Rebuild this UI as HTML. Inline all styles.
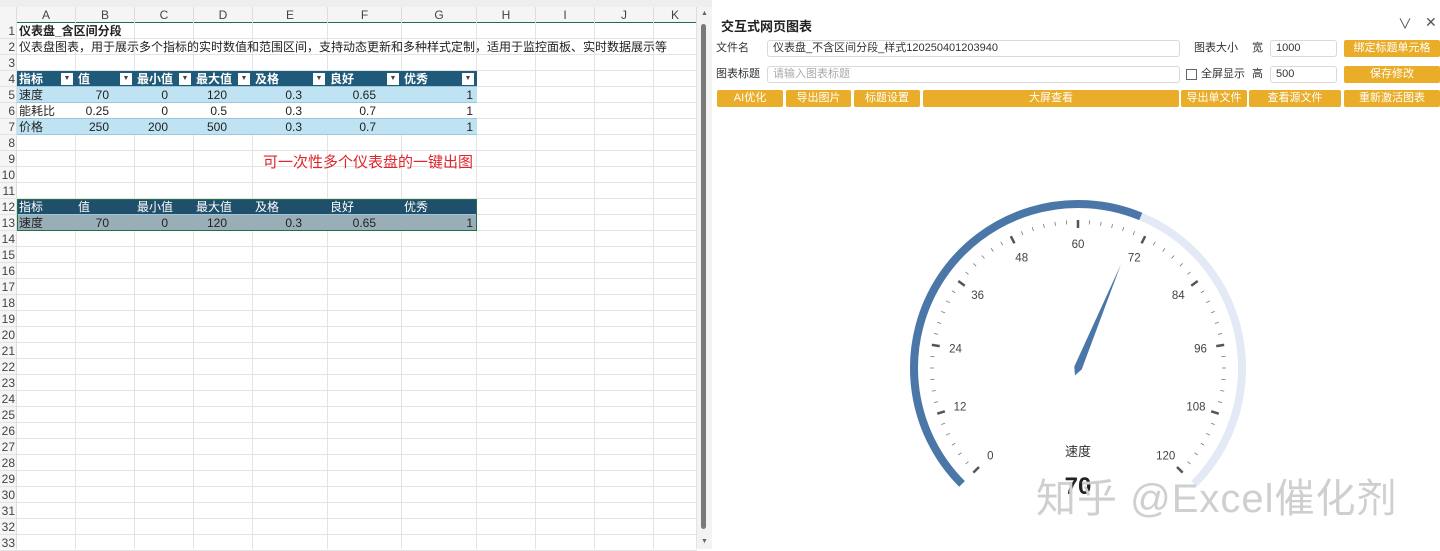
<!DOCTYPE html>
<html><head><meta charset="utf-8">
<style>
*{margin:0;padding:0;box-sizing:border-box}
body{width:1440px;height:549px;overflow:hidden;background:#fff;font-family:"Liberation Sans","Noto Sans CJK SC",sans-serif;position:relative}
.a{position:absolute}
#xl{position:absolute;left:0;top:0;width:697px;height:549px;font-size:12px;color:#222}
.c{position:absolute;white-space:nowrap;line-height:16px;font-size:12px}
.r{text-align:right}
#rp{position:absolute;left:712px;top:0;width:728px;height:549px;background:#fff;font-size:11px;color:#333}
.lb{position:absolute;line-height:17px;font-size:11px}
.in{position:absolute;border:1px solid #d9d9d9;border-radius:3px;height:17px;line-height:15px;padding-left:5px;font-size:11px;background:#fff}
.btn{position:absolute;background:#e9ad29;color:#fff;height:17px;line-height:17px;text-align:center;font-size:11px;border-radius:2px}
</style></head><body>
<div class="a" style="left:0;top:0;width:1440px;height:7px;background:#efedf0"></div>
<div id="xl"></div>
<div class="a" style="left:697px;top:7px;width:15px;height:542px;background:#f3f3f3"></div>
<div class="a" style="left:701px;top:24px;width:5px;height:505px;background:#7a7a7a;border-radius:3px"></div>
<div class="a" style="left:701px;top:10px;font-size:7px;color:#666">▲</div>
<div class="a" style="left:701px;top:538px;font-size:7px;color:#666">▼</div>
<div id="rp">
 <div class="a" style="left:9px;top:16px;font-size:13px;font-weight:bold;color:#222">交互式网页图表</div>
 <div class="a" style="left:686px;top:14px;font-size:14px;color:#555">∨</div>
 <div class="a" style="left:713px;top:14px;font-size:14px;color:#555">✕</div>
 <div class="lb" style="left:4px;top:40px">文件名</div>
 <div class="in" style="left:55px;top:40px;width:413px;color:#333">仪表盘_不含区间分段_样式120250401203940</div>
 <div class="lb" style="left:482px;top:40px">图表大小</div>
 <div class="lb" style="left:540px;top:40px">宽</div>
 <div class="in" style="left:558px;top:40px;width:67px">1000</div>
 <div class="btn" style="left:632px;top:40px;width:96px">绑定标题单元格</div>
 <div class="lb" style="left:4px;top:66px">图表标题</div>
 <div class="in" style="left:55px;top:66px;width:413px;color:#aaa">请输入图表标题</div>
 <div class="a" style="left:474px;top:69px;width:11px;height:11px;border:1px solid #666"></div>
 <div class="lb" style="left:489px;top:66px">全屏显示</div>
 <div class="lb" style="left:540px;top:66px">高</div>
 <div class="in" style="left:558px;top:66px;width:67px">500</div>
 <div class="btn" style="left:632px;top:66px;width:96px">保存修改</div>
 <div class="btn" style="left:5px;top:90px;width:66px">AI优化</div>
 <div class="btn" style="left:74px;top:90px;width:65px">导出图片</div>
 <div class="btn" style="left:142px;top:90px;width:66px">标题设置</div>
 <div class="btn" style="left:211px;top:90px;width:256px">大屏查看</div>
 <div class="btn" style="left:469px;top:90px;width:66px">导出单文件</div>
 <div class="btn" style="left:537px;top:90px;width:92px">查看源文件</div>
 <div class="btn" style="left:632px;top:90px;width:96px">重新激活图表</div>
</div>
<svg id="g" class="a" style="left:0;top:0" width="1440" height="549"></svg>
<div class="a" style="left:1036px;top:466px;font-size:40px;color:#cfcfcf;letter-spacing:1px;font-family:'Liberation Sans','Noto Sans CJK SC',sans-serif">知乎 @Excel催化剂</div>
<script>
var xl=document.getElementById('xl'),h='';
var cols=[['A',17,76],['B',76,135],['C',135,194],['D',194,253],['E',253,328],['F',328,402],['G',402,477],['H',477,536],['I',536,595],['J',595,654],['K',654,697]];
h+='<div class="a" style="left:0;top:7px;width:697px;height:16px;background:#f5f5f5;border-bottom:1px solid #1e7145"></div>';
h+='<div class="a" style="left:0;top:7px;width:17px;height:542px;background:#f5f5f5;border-right:1px solid #ddd"></div>';
cols.forEach(function(c){h+='<div class="a" style="left:'+c[1]+'px;top:7px;width:'+(c[2]-c[1])+'px;height:16px;line-height:16px;text-align:center;color:#444;border-right:1px solid #ddd;font-size:12px">'+c[0]+'</div>';
h+='<div class="a" style="left:'+(c[2]-1)+'px;top:23px;width:1px;height:526px;background:#e3e3e3"></div>';});
for(var n=1;n<=33;n++){var t=23+(n-1)*16;h+='<div class="a" style="left:0;top:'+t+'px;width:697px;height:16px;border-bottom:1px solid #e3e3e3"></div><div class="c" style="left:0;top:'+t+'px;width:15px;text-align:right;color:#444">'+n+'</div>';}
function row(n,bg){return 23+(n-1)*16;}
function band(n,bg,x2){h+='<div class="a" style="left:17px;top:'+row(n)+'px;width:'+(x2-17)+'px;height:16px;background:'+bg+';border-bottom:1px solid #9cc8dc"></div>';}
band(4,'#1f5a7a',477);band(5,'#bfe3f3',477);band(6,'#ffffff',477);band(7,'#bfe3f3',477);band(12,'#1f4f6a',477);band(13,'#9aaeb8',477);
h+='<div class="a" style="left:17px;top:'+row(12)+'px;width:460px;height:32px;border:1px solid #1e7145"></div>';
h+='<div class="c" style="left:19px;top:23px;font-weight:bold">仪表盘_含区间分段</div>';
h+='<div class="c" style="left:19px;top:39px">仪表盘图表，用于展示多个指标的实时数值和范围区间，支持动态更新和多种样式定制，适用于监控面板、实时数据展示等</div>';
var hd=['指标','值','最小值','最大值','及格','良好','优秀'];
[4,12].forEach(function(n){hd.forEach(function(s,i){h+='<div class="c" style="left:'+(cols[i][1]+2)+'px;top:'+row(n)+'px;color:#fff;font-weight:'+(n==4?'bold':'normal')+'">'+s+'</div>';
if(n==4)h+='<div class="a" style="left:'+(cols[i][2]-15)+'px;top:'+(row(n)+2)+'px;width:12px;height:12px;background:#fff;color:#444;font-size:7px;line-height:12px;text-align:center">▼</div>';});});
var data={5:['速度',70,0,120,0.3,0.65,1],6:['能耗比',0.25,0,0.5,0.3,0.7,1],7:['价格',250,200,500,0.3,0.7,1],13:['速度',70,0,120,0.3,0.65,1]};
for(var k in data){data[k].forEach(function(v,i){if(i==0)h+='<div class="c" style="left:19px;top:'+row(+k)+'px">'+v+'</div>';else h+='<div class="c r" style="left:'+cols[i][1]+'px;width:'+(cols[i][2]-cols[i][1]-26+(i==6?22:0))+'px;top:'+row(+k)+'px">'+v+'</div>';});}
h+='<div class="c" style="left:263px;top:153px;font-size:15px;color:#e0242b;line-height:20px">可一次性多个仪表盘的一键出图</div>';
xl.innerHTML=h;
var cx=1078,cy=368,R=164,s='';
function P(a,r){var t=a*Math.PI/180;return [cx+r*Math.cos(t),cy-r*Math.sin(t)];}
function arc(a1,a2,r,col,w){var p1=P(a1,r),p2=P(a2,r),lg=(a1-a2)>180?1:0;return '<path d="M'+p1[0]+' '+p1[1]+' A'+r+' '+r+' 0 '+lg+' 1 '+p2[0]+' '+p2[1]+'" fill="none" stroke="'+col+'" stroke-width="'+w+'"/>';}
s+=arc(225,-45,R,'#e3e9f5',8);
s+=arc(225,67.5,R,'#4a76a8',8);
for(var i=0;i<=60;i++){var a=225-i*4.5,big=i%6==0;var p1=P(a,R-16),p2=P(a,R-(big?24:20));
s+='<line x1="'+p1[0]+'" y1="'+p1[1]+'" x2="'+p2[0]+'" y2="'+p2[1]+'" stroke="'+(big?'#555':'#777')+'" stroke-width="'+(big?2.5:0.8)+'"/>';
if(big){var q=P(a,R-40);s+='<text x="'+q[0]+'" y="'+(q[1]+4)+'" font-size="11.5" fill="#444" text-anchor="middle" font-family="Liberation Sans,sans-serif">'+(i*2)+'</text>';}}
var na=67.5,tip=P(na,112),b1=P(na+90,4),b2=P(na-90,4),tl=P(na+180,8);
s+='<polygon points="'+tip+' '+b1+' '+tl+' '+b2+'" fill="#4a76a8"/>';
s+='<text x="'+cx+'" y="456" font-size="13" fill="#333" text-anchor="middle" font-family="Liberation Sans,Noto Sans CJK SC,sans-serif">速度</text>';
s+='<text x="'+cx+'" y="494" font-size="24" font-weight="bold" fill="#222" text-anchor="middle" font-family="Liberation Sans,sans-serif">70</text>';
document.getElementById('g').innerHTML=s;
</script>
</body></html>
